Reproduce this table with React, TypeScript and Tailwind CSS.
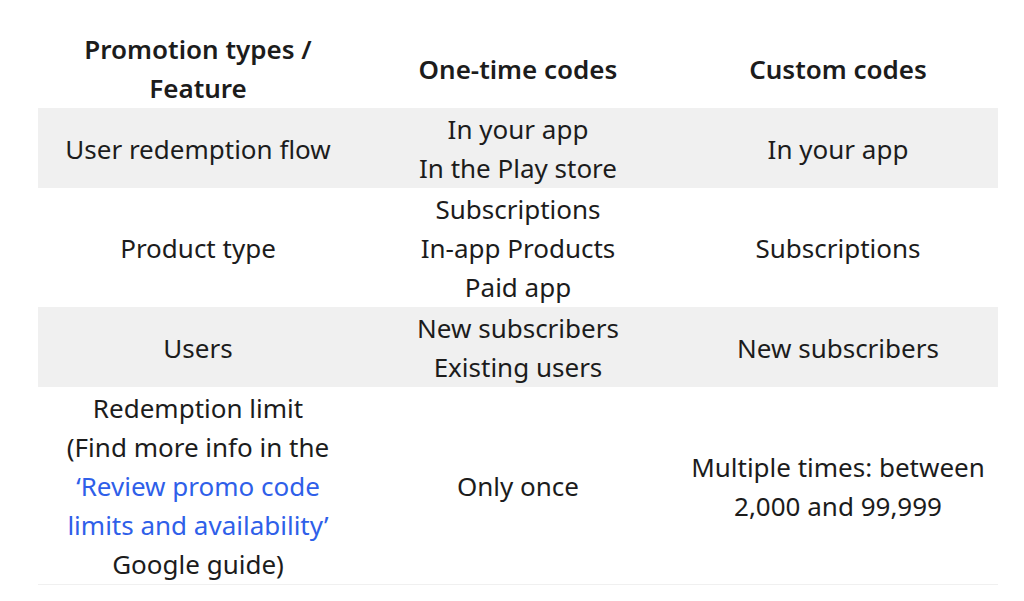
import React from 'react'

type Row = { feature: React.ReactNode; oneTime: string[]; custom: string[]; shaded: boolean }

const rows: Row[] = [
  { feature: 'User redemption flow', oneTime: ['In your app', 'In the Play store'], custom: ['In your app'], shaded: true },
  { feature: 'Product type', oneTime: ['Subscriptions', 'In-app Products', 'Paid app'], custom: ['Subscriptions'], shaded: false },
  { feature: 'Users', oneTime: ['New subscribers', 'Existing users'], custom: ['New subscribers'], shaded: true },
  {
    feature: (
      <>
        Redemption limit
        <br />
        (Find more info in the
        <br />
        <a className="text-[#2f5fe9]" href="#">
          ‘Review promo code
          <br />
          limits and availability’
        </a>
        <br />
        Google guide)
      </>
    ),
    oneTime: ['Only once'],
    custom: ['Multiple times: between', '2,000 and 99,999'],
    shaded: false,
  },
]

const Lines = ({ items }: { items: string[] }) => (
  <>
    {items.map((t, i) => (
      <div key={i}>{t}</div>
    ))}
  </>
)

export default function App() {
  return (
    <div className="w-[1024px] h-[601px] bg-white pl-[38px]" style={{ fontFamily: '"Noto Sans", "Open Sans", sans-serif' }}>
      <table className="w-[960px] table-fixed border-collapse text-[26px] leading-[39px] text-[#1c1c1c]">
        <thead>
          <tr className="h-[108px]">
            <th className="w-[320px] px-[10px] pt-[30px] text-center align-middle font-semibold">
              Promotion types /<br />Feature
            </th>
            <th className="w-[320px] px-[10px] pt-[30px] text-center align-middle font-semibold">One-time codes</th>
            <th className="w-[320px] px-[10px] pt-[30px] text-center align-middle font-semibold">Custom codes</th>
          </tr>
        </thead>
        <tbody>
          {rows.map((r, i) => (
            <tr
              key={i}
              className={(r.shaded ? 'bg-[#f0f0f0] ' : '') + (i === rows.length - 1 ? 'border-b border-[#f0f0f0]' : '')}
            >
              <td className="px-[10px] pt-[2px] pb-0 text-center align-middle">{r.feature}</td>
              <td className="px-[10px] pt-[2px] pb-0 text-center align-middle">
                <Lines items={r.oneTime} />
              </td>
              <td className="px-[10px] pt-[2px] pb-0 text-center align-middle">
                <Lines items={r.custom} />
              </td>
            </tr>
          ))}
        </tbody>
      </table>
    </div>
  )
}
